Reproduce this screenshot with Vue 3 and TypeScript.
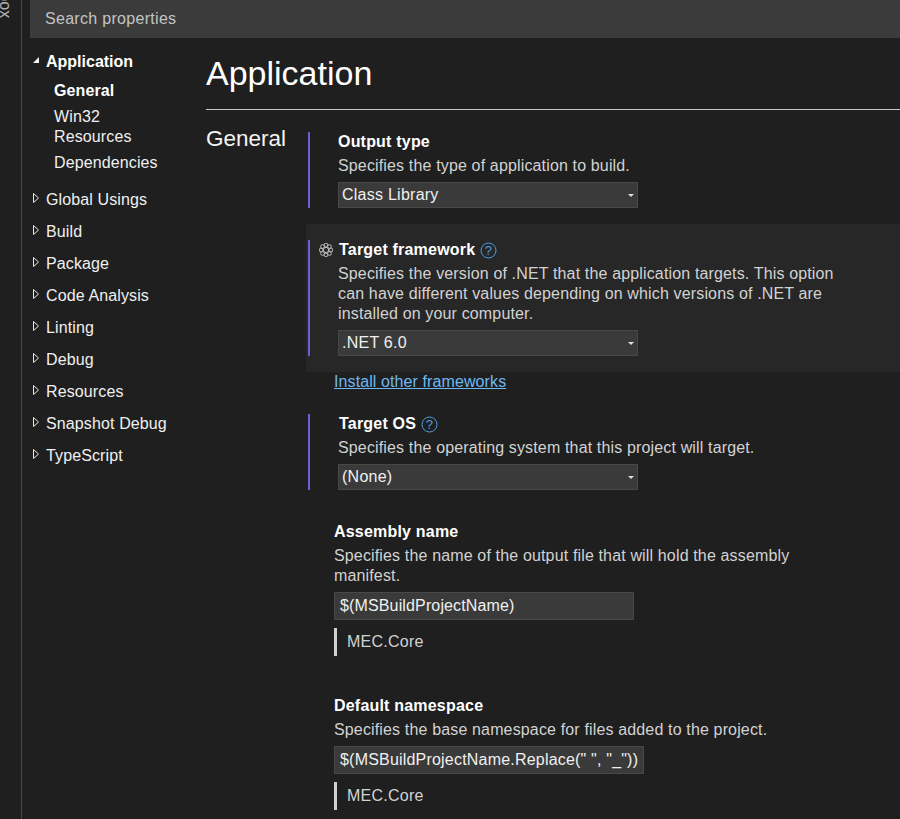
<script setup lang="ts">
const navItems = [
  "Global Usings",
  "Build",
  "Package",
  "Code Analysis",
  "Linting",
  "Debug",
  "Resources",
  "Snapshot Debug",
  "TypeScript",
];
const subItems = ["General", "Win32 Resources", "Dependencies"];
// bumps of the "changed setting" gear, drawn round its hub
const gearBumps = Array.from({ length: 8 }, (_, i) => ({
  cx: 7 + 4.9 * Math.cos((i * Math.PI) / 4),
  cy: 7 + 4.9 * Math.sin((i * Math.PI) / 4),
}));
</script>

<template>
  <div class="app">
    <div class="toolstrip"><span class="toolbox">Toolbox</span></div>
    <div class="pane">
      <div class="search">Search properties</div>
      <div class="body">
        <nav class="nav">
          <div class="nav-row active">
            <svg class="twisty" width="8" height="8" viewBox="0 0 8 8" aria-hidden="true">
              <path d="M7 1v6H1z" fill="#f4f4f4" />
            </svg>
            Application
          </div>
          <ul class="sub">
            <li v-for="(s, i) in subItems" :key="s" :class="{ current: i === 0 }">{{ s }}</li>
          </ul>
          <div v-for="n in navItems" :key="n" class="nav-row">
            <svg class="twisty" width="8" height="12" viewBox="0 0 8 12" aria-hidden="true">
              <path d="M1.5 1.5l5 4.5-5 4.5z" fill="none" stroke="#e6e6e6" />
            </svg>
            {{ n }}
          </div>
        </nav>

        <main class="main">
          <header class="page-head"><h1>Application</h1></header>
          <div class="group">
            <h2>General</h2>
            <div class="fields">
              <section class="opt">
                <div class="opt-title">Output type</div>
                <p class="desc">Specifies the type of application to build.</p>
                <div class="select">Class Library<i class="caret" /></div>
              </section>

              <div class="changed">
                <section class="opt">
                  <div class="opt-title has-gear">
                    <svg class="gear" width="14" height="14" viewBox="0 0 14 14" aria-hidden="true">
                      <g fill="none" stroke="#bcbcbc">
                        <circle v-for="(b, i) in gearBumps" :key="i" :cx="b.cx" :cy="b.cy" r="1.9" />
                        <circle cx="7" cy="7" r="2.6" />
                      </g>
                    </svg>
                    Target framework
                    <svg class="help" width="17" height="17" viewBox="0 0 17 17" aria-hidden="true">
                      <circle cx="8.5" cy="8.5" r="7.5" fill="none" stroke="#4f9fe0" />
                      <text x="8.5" y="13" text-anchor="middle">?</text>
                    </svg>
                  </div>
                  <p class="desc">
                    Specifies the version of .NET that the application targets. This option can have different values depending on which versions of .NET are installed on your computer.
                  </p>
                  <div class="select">.NET 6.0<i class="caret" /></div>
                </section>
              </div>

              <a class="link" href="#">Install other frameworks</a>

              <section class="opt os">
                <div class="opt-title">
                  Target OS
                  <svg class="help" width="17" height="17" viewBox="0 0 17 17" aria-hidden="true">
                    <circle cx="8.5" cy="8.5" r="7.5" fill="none" stroke="#4f9fe0" />
                    <text x="8.5" y="13" text-anchor="middle">?</text>
                  </svg>
                </div>
                <p class="desc">Specifies the operating system that this project will target.</p>
                <div class="select">(None)<i class="caret" /></div>
              </section>

              <section class="plain first">
                <div class="opt-title">Assembly name</div>
                <p class="desc">Specifies the name of the output file that will hold the assembly manifest.</p>
                <div class="textbox">$(MSBuildProjectName)</div>
                <div class="preview">MEC.Core</div>
              </section>

              <section class="plain">
                <div class="opt-title">Default namespace</div>
                <p class="desc">Specifies the base namespace for files added to the project.</p>
                <div class="textbox wide">$(MSBuildProjectName.Replace(" ", "_"))</div>
                <div class="preview">MEC.Core</div>
              </section>
            </div>
          </div>
        </main>
      </div>
    </div>
  </div>
</template>

<style>
html,
body {
  margin: 0;
  background: #1f1f1f;
}
</style>

<style scoped>
.app {
  display: flex;
  width: 900px;
  height: 819px;
  overflow: hidden;
  background: #1f1f1f;
  color: #f0f0f0;
  font-family: "Liberation Sans", Arial, sans-serif;
  font-size: 16px;
}

.toolstrip {
  flex: none;
  width: 21px;
  border-right: 1px solid #464646;
  overflow: hidden;
}
.toolbox {
  display: block;
  margin-top: -37px;
  writing-mode: vertical-rl;
  line-height: 10px;
  height: 60px;
  width: 10px;
  color: #b4b4b4;
}

.pane {
  flex: 1;
  min-width: 0;
  padding-left: 8px;
}
.search {
  height: 38px;
  line-height: 37px;
  padding-left: 15px;
  background: #3b3b3b;
  color: #c4c4c4;
  letter-spacing: 0.3px;
}
.body {
  display: flex;
}

.nav {
  flex: none;
  width: 176px;
  padding-top: 14px;
  letter-spacing: 0.12px;
}
.nav-row {
  display: flex;
  align-items: center;
  height: 20px;
  line-height: 20px;
  margin-bottom: 12px;
}
.nav-row.active {
  font-weight: 700;
  color: #fff;
  margin-bottom: 0;
  letter-spacing: 0;
}
.twisty {
  flex: none;
  width: 8px;
  margin-left: 2px;
  margin-right: 6px;
  margin-top: -4px;
}
.sub {
  list-style: none;
  margin: 9px 0 17px;
  padding: 0 0 0 24px;
  max-width: 115px;
  line-height: 20px;
}
.sub li + li {
  margin-top: 6px;
}
.sub .current {
  font-weight: 700;
  color: #fff;
}

.main {
  flex: 1;
  min-width: 0;
  padding-top: 15px;
}
.page-head {
  padding-bottom: 16px;
  border-bottom: 1px solid #c8c8c8;
}
h1 {
  margin: 0;
  font-size: 34px;
  line-height: 40px;
  font-weight: 400;
  color: #fff;
}
.group {
  display: flex;
}
h2 {
  flex: none;
  width: 100px;
  margin: 16px 0 0;
  font-size: 22.5px;
  line-height: 26px;
  font-weight: 400;
  color: #f4f4f4;
}
.fields {
  flex: 1;
  min-width: 0;
  padding-top: 22px;
}

.opt {
  margin-left: 2px;
  padding-left: 28px;
  border-left: 2px solid #6a5fd6;
}
.opt-title {
  display: flex;
  align-items: center;
  height: 18px;
  line-height: 18px;
  padding-top: 1px;
  font-weight: 700;
  color: #fff;
  letter-spacing: 0.2px;
}
.changed .opt-title,
.os .opt-title {
  margin-left: 1px;
}
.has-gear {
  margin-left: -19px !important;
}
.gear {
  margin-right: 6px;
}
.help {
  margin-left: 4.5px;
}
.help text {
  font-family: "Liberation Sans", Arial, sans-serif;
  font-size: 13px;
  font-weight: 400;
  fill: #4f9fe0;
}
.desc {
  margin: 5px 0 6px;
  max-width: 500px;
  line-height: 20px;
  color: #d2d2d2;
  letter-spacing: 0.15px;
}
.select {
  position: relative;
  box-sizing: border-box;
  width: 300px;
  height: 26px;
  line-height: 24px;
  padding-left: 3px;
  background: #3a3a3a;
  border: 1px solid #484848;
  color: #f0f0f0;
  letter-spacing: 0.25px;
}
.caret {
  position: absolute;
  right: 3px;
  top: 11px;
  width: 0;
  height: 0;
  border-left: 3px solid transparent;
  border-right: 3px solid transparent;
  border-top: 3px solid #e0e0e0;
}

.changed {
  margin-top: 16px;
  padding: 16px 0;
  background: #272727;
}
.link {
  display: block;
  width: fit-content;
  margin: 0 0 24px 28px;
  padding-top: 1px;
  height: 17px;
  line-height: 18px;
  color: #6db8f2;
  letter-spacing: 0.1px;
}

.plain {
  padding-left: 28px;
  margin-top: 40px;
}
.plain.first {
  margin-top: 32px;
}
.textbox {
  box-sizing: border-box;
  width: fit-content;
  min-width: 300px;
  height: 28px;
  line-height: 26px;
  padding: 0 5px;
  background: #3a3a3a;
  border: 1px solid #484848;
  color: #f0f0f0;
  white-space: nowrap;
  letter-spacing: 0.14px;
}
.textbox.wide {
  letter-spacing: 0.2px;
}
.preview {
  height: 28px;
  line-height: 28px;
  margin-top: 8px;
  padding-left: 10px;
  border-left: 3px solid #d0d0d0;
  color: #d2d2d2;
  letter-spacing: 0.25px;
}
</style>
